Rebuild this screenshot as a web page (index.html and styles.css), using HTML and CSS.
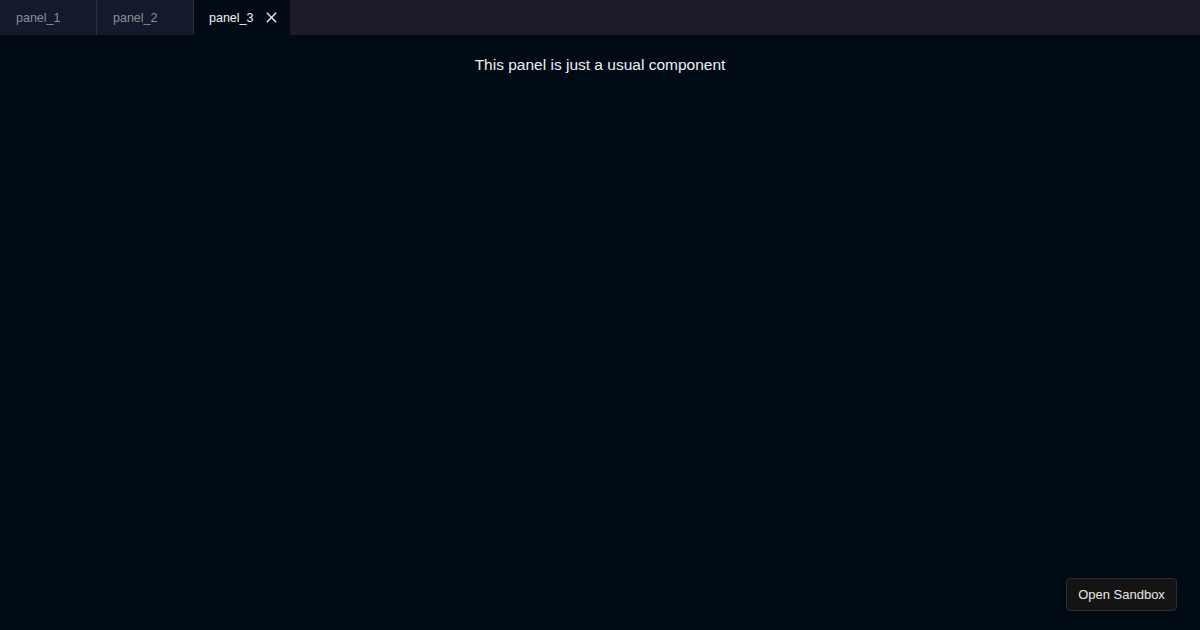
FILE: index.html
```html
<!DOCTYPE html>
<html>
<head>
<meta charset="utf-8">
<link rel="stylesheet" href="styles.css">
</head>
<body>
<div class="app">
  <div class="tabbar">
    <div class="tab">panel_1</div>
    <div class="tab">panel_2</div>
    <div class="tab active">panel_3
      <svg class="close" width="11" height="11" viewBox="0 0 11 11"><path d="M0.8 0.8L10.2 10.2M10.2 0.8L0.8 10.2" stroke="#e8eaee" stroke-width="1.4" fill="none"/></svg>
    </div>
    <div class="filler"></div>
  </div>
  <div class="content">
    <p class="msg">This panel is just a usual component</p>
  </div>
  <button class="sandbox">Open Sandbox</button>
</div>
</body>
</html>
```
FILE: styles.css
```css
html, body {
  margin: 0;
  padding: 0;
  height: 100%;
  background: #000b16;
  font-family: "Liberation Sans", Arial, sans-serif;
}
.app {
  height: 630px;
  display: flex;
  flex-direction: column;
  position: relative;
}
.tabbar {
  display: flex;
  height: 35px;
  flex: none;
}
.tab {
  width: 97px;
  flex: none;
  box-sizing: border-box;
  padding-left: 16px;
  display: flex;
  align-items: center;
  background: #131a2b;
  color: #8b909b;
  font-size: 12.5px;
  border-right: 1px solid #2a3040;
}
.tab.active {
  width: 96px;
  padding-left: 15px;
  background: #000b16;
  color: #f2f3f5;
  border-right: none;
}
.close {
  margin-left: 12px;
}
.filler {
  flex: 1;
  background: #1d1b29;
}
.content {
  flex: 1;
  display: flex;
  justify-content: center;
}
.msg {
  margin: 20px 0 0;
  color: #eef0f3;
  font-size: 15.5px;
  line-height: 19px;
}
.sandbox {
  position: absolute;
  right: 23px;
  bottom: 19px;
  width: 111px;
  height: 33px;
  background: #141414;
  color: #e8e8e8;
  border: 1px solid #2e2e32;
  border-radius: 4px;
  font-family: "Liberation Sans", Arial, sans-serif;
  font-size: 13px;
  padding: 0;
}
```
